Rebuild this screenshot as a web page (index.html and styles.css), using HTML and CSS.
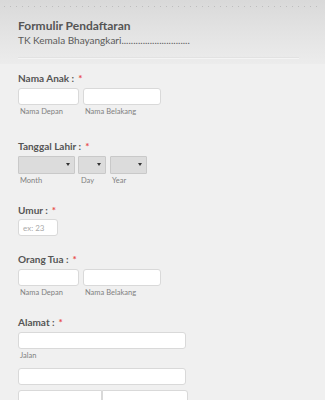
FILE: index.html
```html
<!DOCTYPE html>
<html>
<head>
<meta charset="utf-8">
<link rel="stylesheet" href="styles.css">
</head>
<body>
<div class="page">
  <header class="header">
    <div class="dots"></div>
    <h1 class="title">Formulir Pendaftaran</h1>
    <div class="subtitle">TK Kemala Bhayangkari.............................</div>
    <div class="divider"></div>
  </header>

  <main class="form">
    <div class="field field-first">
      <div class="label">Nama Anak :<span class="req">*</span></div>
      <div class="row">
        <div class="col"><div class="input w-first"></div><div class="sub">Nama Depan</div></div>
        <div class="col"><div class="input w-last"></div><div class="sub">Nama Belakang</div></div>
      </div>
    </div>

    <div class="field">
      <div class="label">Tanggal Lahir :<span class="req">*</span></div>
      <div class="row row-sel">
        <div class="col"><div class="select w-month"><span class="arrow"></span></div><div class="sub">Month</div></div>
        <div class="col"><div class="select w-day"><span class="arrow"></span></div><div class="sub">Day</div></div>
        <div class="col"><div class="select w-year"><span class="arrow"></span></div><div class="sub">Year</div></div>
      </div>
    </div>

    <div class="field field-age">
      <div class="label">Umur :<span class="req">*</span></div>
      <div class="input w-age"><span class="ph">ex: 23</span></div>
    </div>

    <div class="field">
      <div class="label">Orang Tua :<span class="req">*</span></div>
      <div class="row">
        <div class="col"><div class="input w-first"></div><div class="sub">Nama Depan</div></div>
        <div class="col"><div class="input w-last"></div><div class="sub">Nama Belakang</div></div>
      </div>
    </div>

    <div class="field">
      <div class="label">Alamat :<span class="req">*</span></div>
      <div class="input w-addr"></div>
      <div class="sub">Jalan</div>
      <div class="input w-addr addr2"></div>
      <div class="row row-join">
        <div class="input w-city"></div>
        <div class="input w-state"></div>
      </div>
    </div>
  </main>
</div>
</body>
</html>
```

FILE: styles.css
```css
html, body {
  margin: 0;
  padding: 0;
  background: #f0f0f0;
}
body {
  font-family: Lato, "Open Sans", "Liberation Sans", sans-serif;
  color: #555;
  overflow: hidden;
}
.page {
  width: 325px;
  height: 400px;
  overflow: hidden;
}
.header {
  height: 64px;
  background: linear-gradient(to bottom, #d9d9d9 0%, #e3e3e3 50%, #ececec 100%);
  padding-top: 6px;
  box-sizing: border-box;
}
.dots {
  height: 1px;
  margin: 0 4px;
  background: repeating-linear-gradient(to right, #bdbdbd 0 1px, transparent 1px 6px);
}
.title {
  margin: 11px 0 0 18px;
  font-size: 12px;
  line-height: 15px;
  font-weight: 700;
  color: #555;
}
.subtitle {
  margin: 1px 0 0 18px;
  font-size: 10px;
  line-height: 13px;
  color: #5a5a5a;
}
.divider {
  margin: 10px 26px 0 18px;
  height: 1px;
  background: #e2e2e2;
  border-bottom: 1px solid #f4f4f4;
}
.form {
  padding: 0 0 0 18px;
}
.field {
  margin-bottom: 17px;
}
.field-first {
  margin-top: 7px;
  margin-bottom: 22px;
}
.field-age {
  margin-bottom: 16px;
}
.label {
  font-size: 10px;
  line-height: 14px;
  font-weight: 700;
  color: #555;
  margin-bottom: 3px;
}
.req {
  color: #e84b4b;
  margin-left: 4px;
  font-weight: 700;
}
.row {
  display: flex;
  gap: 4px;
}
.col {
  display: flex;
  flex-direction: column;
}
.input {
  box-sizing: border-box;
  height: 17px;
  background: #fff;
  border: 1px solid #d9d9d9;
  border-radius: 3px;
  display: flex;
  align-items: center;
}
.w-first { width: 61px; }
.w-last { width: 78px; }
.w-age { width: 40px; height: 17px; margin-top: -1px; }
.w-addr { width: 168px; }
.addr2 { margin-top: 7px; }
.w-city { width: 84px; border-radius: 3px 0 0 0; }
.w-state { width: 86px; border-radius: 0 3px 0 0; }
.row-join {
  gap: 0;
  margin-top: 5px;
}
.ph {
  font-size: 8px;
  color: #aaa;
  padding-left: 4px;
}
.sub {
  font-size: 7.5px;
  line-height: 10px;
  color: #808080;
  margin-top: 2px;
  padding-left: 2px;
}
.select {
  position: relative;
  box-sizing: border-box;
  height: 18px;
  background: #dcdcdc;
  border: 1px solid #c9c9c9;
  border-radius: 1px;
}
.w-month { width: 57px; }
.w-day { width: 28px; margin-left: -1px; }
.w-year { width: 37px; }
.arrow {
  position: absolute;
  right: 4px;
  top: 6px;
  width: 0;
  height: 0;
  border-left: 2px solid transparent;
  border-right: 2px solid transparent;
  border-top: 3px solid #333;
}
```
